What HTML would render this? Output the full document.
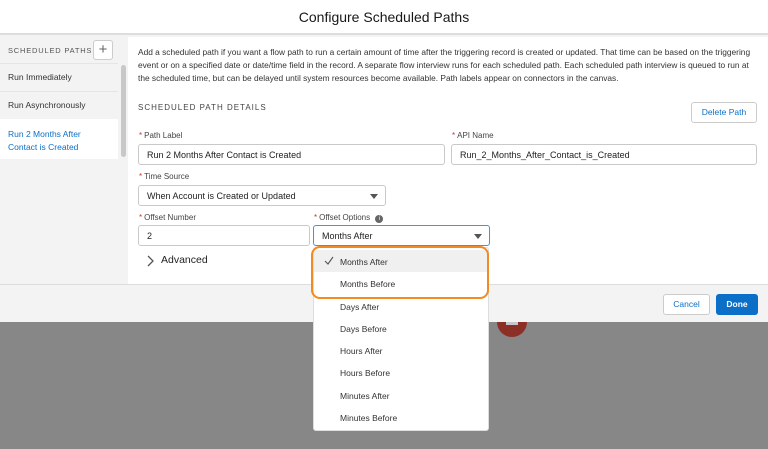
<!DOCTYPE html>
<html><head><style>
*{box-sizing:border-box;margin:0;padding:0}
body{width:768px;height:449px;overflow:hidden;position:relative;font-family:"Liberation Sans",sans-serif;background:#878787;color:#181818}
.a{position:absolute}
.inp{position:absolute;height:21px;border:1px solid #c9c9c9;border-radius:3px;background:#fff;font-size:9px;padding:5px 8px;color:#222}
.lbl{position:absolute;font-size:8px;color:#444}
.lbl b{color:#c23934;font-weight:normal;margin-right:2px}
.caret{position:absolute;right:7px;top:8px;width:0;height:0;border-left:4px solid transparent;border-right:4px solid transparent;border-top:5px solid #555}
.opt{position:absolute;left:26px;font-size:8.5px;color:#333}
</style></head><body>
<div class="a" style="left:0;top:0;width:768px;height:322px;background:#f3f3f3"></div>
<div class="a" style="left:0;top:0;width:768px;height:35px;background:#fff;border-bottom:2px solid #ddd"></div>
<div class="a" style="left:0;top:9px;width:768px;text-align:center;font-size:14px;color:#181818">Configure Scheduled Paths</div>
<div class="a" style="left:128px;top:37px;width:640px;height:247px;background:#fff"></div>
<div class="a" style="left:0;top:284px;width:768px;height:1px;background:#ddd"></div>
<div class="a" style="left:8px;top:46px;font-size:7.5px;letter-spacing:0.8px;color:#555">SCHEDULED PATHS</div>
<div class="a" style="left:93px;top:40px;width:20px;height:20px;border:1px solid #ccc;border-radius:3px;background:#fff;text-align:center;font-size:15px;line-height:17px;color:#666">+</div>
<div class="a" style="left:0;top:63px;width:118px;height:1px;background:#e5e5e5"></div>
<div class="a" style="left:8px;top:72px;font-size:8.5px;color:#333">Run Immediately</div>
<div class="a" style="left:0;top:91px;width:118px;height:1px;background:#e5e5e5"></div>
<div class="a" style="left:8px;top:100px;font-size:8.5px;color:#333">Run Asynchronously</div>
<div class="a" style="left:0;top:119px;width:118px;height:40px;background:#fff"></div>
<div class="a" style="left:8px;top:128px;font-size:8.5px;color:#0b6fc8;line-height:13px">Run 2 Months After<br>Contact is Created</div>
<div class="a" style="left:121px;top:65px;width:5px;height:92px;background:#c8c8c8;border-radius:3px"></div>
<div class="a" style="left:138px;top:46px;width:622px;font-size:8.35px;line-height:13px;color:#333">Add a scheduled path if you want a flow path to run a certain amount of time after the triggering record is created or updated. That time can be based on the triggering event or on a specified date or date/time field in the record. A separate flow interview runs for each scheduled path. Each scheduled path interview is queued to run at the scheduled time, but can be delayed until system resources become available. Path labels appear on connectors in the canvas.</div>
<div class="a" style="left:138px;top:103px;font-size:8px;letter-spacing:1px;color:#444">SCHEDULED PATH DETAILS</div>
<div class="a" style="left:691px;top:102px;width:66px;height:21px;border:1px solid #ccc;border-radius:3px;text-align:center;font-size:8.5px;line-height:19px;color:#0b6fc8">Delete Path</div>
<div class="lbl" style="left:139px;top:131px"><b>*</b>Path Label</div>
<div class="inp" style="left:138px;top:144px;width:307px">Run 2 Months After Contact is Created</div>
<div class="lbl" style="left:452px;top:131px"><b>*</b>API Name</div>
<div class="inp" style="left:451px;top:144px;width:306px">Run_2_Months_After_Contact_is_Created</div>
<div class="lbl" style="left:139px;top:172px"><b>*</b>Time Source</div>
<div class="inp" style="left:138px;top:185px;width:248px">When Account is Created or Updated<div class="caret"></div></div>
<div class="lbl" style="left:139px;top:213px"><b>*</b>Offset Number</div>
<div class="inp" style="left:138px;top:225px;width:172px">2</div>
<div class="lbl" style="left:314px;top:213px"><b>*</b>Offset Options <span style="display:inline-block;width:8px;height:8px;border-radius:50%;background:#666;color:#fff;font-size:6px;text-align:center;line-height:8px;margin-left:3px">i</span></div>
<div class="inp" style="left:313px;top:225px;width:177px;border-color:#4a90e2">Months After<div class="caret"></div></div>
<svg class="a" style="left:146px;top:255px" width="8" height="12"><path d="M2 1 L7 6 L2 11" fill="none" stroke="#555" stroke-width="1.3"/></svg>
<div class="a" style="left:161px;top:254px;font-size:10.5px;color:#222">Advanced</div>
<div class="a" style="left:663px;top:294px;width:47px;height:21px;border:1px solid #ccc;border-radius:3px;background:#fff;text-align:center;font-size:8.5px;line-height:19px;color:#0b6fc8">Cancel</div>
<div class="a" style="left:716px;top:294px;width:42px;height:21px;border-radius:3px;background:#0b6fc8;text-align:center;font-size:8.5px;line-height:21px;color:#fff;font-weight:bold">Done</div>
<div class="a" style="left:497px;top:307px;width:30px;height:30px;border-radius:50%;background:#8c2f27;clip-path:inset(15px 0 0 0)"></div>
<div class="a" style="left:506px;top:322px;width:12px;height:3px;background:#c8c8c8"></div>
<div class="a" style="left:313px;top:247px;width:176px;height:184px;background:#fff;border:1px solid #ddd;border-radius:3px">
<div class="a" style="left:0;top:2px;width:174px;height:22px;background:#f0f0f0"></div>
<svg class="a" style="left:10px;top:8px" width="10" height="9"><path d="M1 5 L4 8 L9 1" fill="none" stroke="#555" stroke-width="1.1"/></svg>
<div class="opt" style="top:9px">Months After</div>
<div class="opt" style="top:31px">Months Before</div>
<div class="opt" style="top:54px">Days After</div>
<div class="opt" style="top:76px">Days Before</div>
<div class="opt" style="top:98px">Hours After</div>
<div class="opt" style="top:120px">Hours Before</div>
<div class="opt" style="top:143px">Minutes After</div>
<div class="opt" style="top:165px">Minutes Before</div>
</div>
<div class="a" style="left:311px;top:246px;width:178px;height:53px;border:2px solid #f28b20;border-radius:9px"></div>
</body></html>
